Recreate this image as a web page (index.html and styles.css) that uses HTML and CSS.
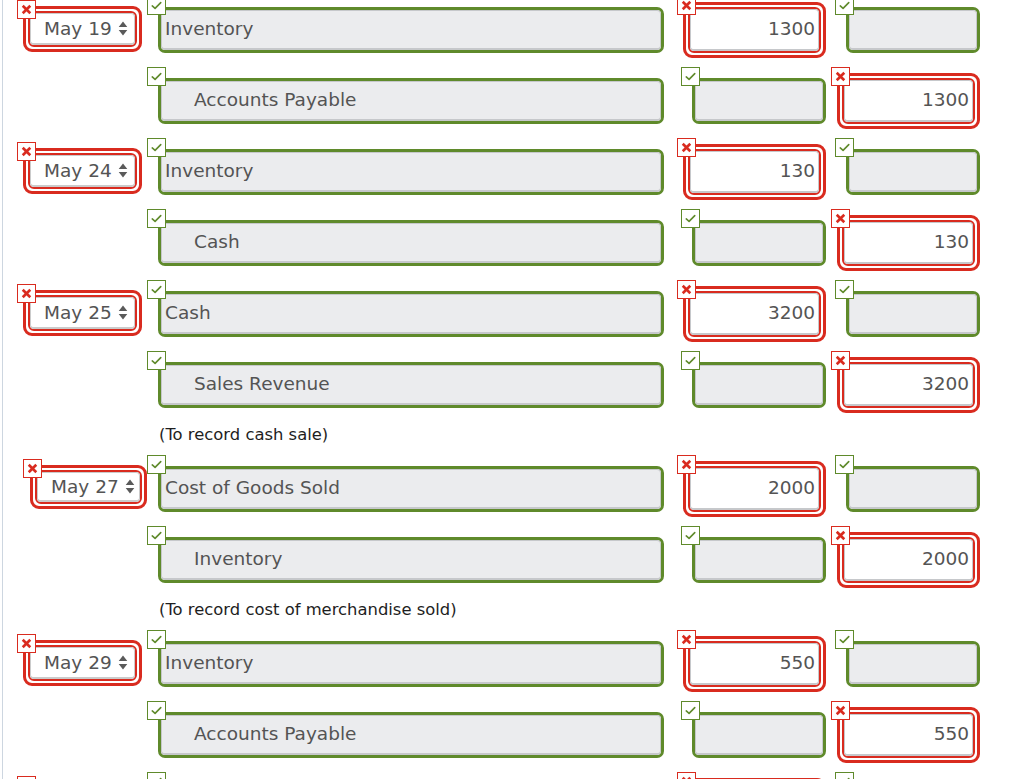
FILE: index.html
```html
<!DOCTYPE html>
<html>
<head>
<meta charset="utf-8">
<link rel="stylesheet" href="styles.css">
</head>
<body>
<div class="page">
  <div class="journal">

    <div class="row">
      <div class="cell date bad"><span class="badge x"><svg viewBox="0 0 18 18"><path d="M5 5L13 13M13 5L5 13"/></svg></span><div class="dbox"><div class="rin"><div class="sel">May 19<svg class="arr" viewBox="0 0 9 14"><path d="M4.5 0.5L8.5 5.5H0.5Z M4.5 13.5L8.5 8.5H0.5Z"/></svg></div></div></div></div>
      <div class="cell acct ok"><span class="badge v"><svg viewBox="0 0 18 18"><path d="M4.5 9.5L7.5 12L13.5 6"/></svg></span><div class="gbox"><div class="field">Inventory</div></div></div>
      <div class="cell amt bad"><span class="badge x"><svg viewBox="0 0 18 18"><path d="M5 5L13 13M13 5L5 13"/></svg></span><div class="rbox"><div class="rin"><div class="field white num">1300</div></div></div></div>
      <div class="cell amt ok"><span class="badge v"><svg viewBox="0 0 18 18"><path d="M4.5 9.5L7.5 12L13.5 6"/></svg></span><div class="gbox"><div class="field"></div></div></div>
    </div>

    <div class="row">
      <div class="cell date"></div>
      <div class="cell acct ok"><span class="badge v"><svg viewBox="0 0 18 18"><path d="M4.5 9.5L7.5 12L13.5 6"/></svg></span><div class="gbox"><div class="field indent">Accounts Payable</div></div></div>
      <div class="cell amt ok"><span class="badge v"><svg viewBox="0 0 18 18"><path d="M4.5 9.5L7.5 12L13.5 6"/></svg></span><div class="gbox"><div class="field"></div></div></div>
      <div class="cell amt bad"><span class="badge x"><svg viewBox="0 0 18 18"><path d="M5 5L13 13M13 5L5 13"/></svg></span><div class="rbox"><div class="rin"><div class="field white num">1300</div></div></div></div>
    </div>

    <div class="row">
      <div class="cell date bad"><span class="badge x"><svg viewBox="0 0 18 18"><path d="M5 5L13 13M13 5L5 13"/></svg></span><div class="dbox"><div class="rin"><div class="sel">May 24<svg class="arr" viewBox="0 0 9 14"><path d="M4.5 0.5L8.5 5.5H0.5Z M4.5 13.5L8.5 8.5H0.5Z"/></svg></div></div></div></div>
      <div class="cell acct ok"><span class="badge v"><svg viewBox="0 0 18 18"><path d="M4.5 9.5L7.5 12L13.5 6"/></svg></span><div class="gbox"><div class="field">Inventory</div></div></div>
      <div class="cell amt bad"><span class="badge x"><svg viewBox="0 0 18 18"><path d="M5 5L13 13M13 5L5 13"/></svg></span><div class="rbox"><div class="rin"><div class="field white num">130</div></div></div></div>
      <div class="cell amt ok"><span class="badge v"><svg viewBox="0 0 18 18"><path d="M4.5 9.5L7.5 12L13.5 6"/></svg></span><div class="gbox"><div class="field"></div></div></div>
    </div>

    <div class="row">
      <div class="cell date"></div>
      <div class="cell acct ok"><span class="badge v"><svg viewBox="0 0 18 18"><path d="M4.5 9.5L7.5 12L13.5 6"/></svg></span><div class="gbox"><div class="field indent">Cash</div></div></div>
      <div class="cell amt ok"><span class="badge v"><svg viewBox="0 0 18 18"><path d="M4.5 9.5L7.5 12L13.5 6"/></svg></span><div class="gbox"><div class="field"></div></div></div>
      <div class="cell amt bad"><span class="badge x"><svg viewBox="0 0 18 18"><path d="M5 5L13 13M13 5L5 13"/></svg></span><div class="rbox"><div class="rin"><div class="field white num">130</div></div></div></div>
    </div>

    <div class="row">
      <div class="cell date bad"><span class="badge x"><svg viewBox="0 0 18 18"><path d="M5 5L13 13M13 5L5 13"/></svg></span><div class="dbox"><div class="rin"><div class="sel">May 25<svg class="arr" viewBox="0 0 9 14"><path d="M4.5 0.5L8.5 5.5H0.5Z M4.5 13.5L8.5 8.5H0.5Z"/></svg></div></div></div></div>
      <div class="cell acct ok"><span class="badge v"><svg viewBox="0 0 18 18"><path d="M4.5 9.5L7.5 12L13.5 6"/></svg></span><div class="gbox"><div class="field">Cash</div></div></div>
      <div class="cell amt bad"><span class="badge x"><svg viewBox="0 0 18 18"><path d="M5 5L13 13M13 5L5 13"/></svg></span><div class="rbox"><div class="rin"><div class="field white num">3200</div></div></div></div>
      <div class="cell amt ok"><span class="badge v"><svg viewBox="0 0 18 18"><path d="M4.5 9.5L7.5 12L13.5 6"/></svg></span><div class="gbox"><div class="field"></div></div></div>
    </div>

    <div class="row">
      <div class="cell date"></div>
      <div class="cell acct ok"><span class="badge v"><svg viewBox="0 0 18 18"><path d="M4.5 9.5L7.5 12L13.5 6"/></svg></span><div class="gbox"><div class="field indent">Sales Revenue</div></div></div>
      <div class="cell amt ok"><span class="badge v"><svg viewBox="0 0 18 18"><path d="M4.5 9.5L7.5 12L13.5 6"/></svg></span><div class="gbox"><div class="field"></div></div></div>
      <div class="cell amt bad"><span class="badge x"><svg viewBox="0 0 18 18"><path d="M5 5L13 13M13 5L5 13"/></svg></span><div class="rbox"><div class="rin"><div class="field white num">3200</div></div></div></div>
    </div>

    <div class="note">(To record cash sale)</div>

    <div class="row">
      <div class="cell date bad shift"><span class="badge x"><svg viewBox="0 0 18 18"><path d="M5 5L13 13M13 5L5 13"/></svg></span><div class="dbox"><div class="rin"><div class="sel">May 27<svg class="arr" viewBox="0 0 9 14"><path d="M4.5 0.5L8.5 5.5H0.5Z M4.5 13.5L8.5 8.5H0.5Z"/></svg></div></div></div></div>
      <div class="cell acct ok"><span class="badge v"><svg viewBox="0 0 18 18"><path d="M4.5 9.5L7.5 12L13.5 6"/></svg></span><div class="gbox"><div class="field">Cost of Goods Sold</div></div></div>
      <div class="cell amt bad"><span class="badge x"><svg viewBox="0 0 18 18"><path d="M5 5L13 13M13 5L5 13"/></svg></span><div class="rbox"><div class="rin"><div class="field white num">2000</div></div></div></div>
      <div class="cell amt ok"><span class="badge v"><svg viewBox="0 0 18 18"><path d="M4.5 9.5L7.5 12L13.5 6"/></svg></span><div class="gbox"><div class="field"></div></div></div>
    </div>

    <div class="row">
      <div class="cell date"></div>
      <div class="cell acct ok"><span class="badge v"><svg viewBox="0 0 18 18"><path d="M4.5 9.5L7.5 12L13.5 6"/></svg></span><div class="gbox"><div class="field indent">Inventory</div></div></div>
      <div class="cell amt ok"><span class="badge v"><svg viewBox="0 0 18 18"><path d="M4.5 9.5L7.5 12L13.5 6"/></svg></span><div class="gbox"><div class="field"></div></div></div>
      <div class="cell amt bad"><span class="badge x"><svg viewBox="0 0 18 18"><path d="M5 5L13 13M13 5L5 13"/></svg></span><div class="rbox"><div class="rin"><div class="field white num">2000</div></div></div></div>
    </div>

    <div class="note">(To record cost of merchandise sold)</div>

    <div class="row">
      <div class="cell date bad"><span class="badge x"><svg viewBox="0 0 18 18"><path d="M5 5L13 13M13 5L5 13"/></svg></span><div class="dbox"><div class="rin"><div class="sel">May 29<svg class="arr" viewBox="0 0 9 14"><path d="M4.5 0.5L8.5 5.5H0.5Z M4.5 13.5L8.5 8.5H0.5Z"/></svg></div></div></div></div>
      <div class="cell acct ok"><span class="badge v"><svg viewBox="0 0 18 18"><path d="M4.5 9.5L7.5 12L13.5 6"/></svg></span><div class="gbox"><div class="field">Inventory</div></div></div>
      <div class="cell amt bad"><span class="badge x"><svg viewBox="0 0 18 18"><path d="M5 5L13 13M13 5L5 13"/></svg></span><div class="rbox"><div class="rin"><div class="field white num">550</div></div></div></div>
      <div class="cell amt ok"><span class="badge v"><svg viewBox="0 0 18 18"><path d="M4.5 9.5L7.5 12L13.5 6"/></svg></span><div class="gbox"><div class="field"></div></div></div>
    </div>

    <div class="row">
      <div class="cell date"></div>
      <div class="cell acct ok"><span class="badge v"><svg viewBox="0 0 18 18"><path d="M4.5 9.5L7.5 12L13.5 6"/></svg></span><div class="gbox"><div class="field indent">Accounts Payable</div></div></div>
      <div class="cell amt ok"><span class="badge v"><svg viewBox="0 0 18 18"><path d="M4.5 9.5L7.5 12L13.5 6"/></svg></span><div class="gbox"><div class="field"></div></div></div>
      <div class="cell amt bad"><span class="badge x"><svg viewBox="0 0 18 18"><path d="M5 5L13 13M13 5L5 13"/></svg></span><div class="rbox"><div class="rin"><div class="field white num">550</div></div></div></div>
    </div>

    <div class="row">
      <div class="cell date bad"><span class="badge x"><svg viewBox="0 0 18 18"><path d="M5 5L13 13M13 5L5 13"/></svg></span><div class="dbox"><div class="rin"><div class="sel"></div></div></div></div>
      <div class="cell acct ok"><span class="badge v"><svg viewBox="0 0 18 18"><path d="M4.5 9.5L7.5 12L13.5 6"/></svg></span><div class="gbox"><div class="field"></div></div></div>
      <div class="cell amt bad"><span class="badge x"><svg viewBox="0 0 18 18"><path d="M5 5L13 13M13 5L5 13"/></svg></span><div class="rbox"><div class="rin"><div class="field white num"></div></div></div></div>
      <div class="cell amt ok"><span class="badge v"><svg viewBox="0 0 18 18"><path d="M4.5 9.5L7.5 12L13.5 6"/></svg></span><div class="gbox"><div class="field"></div></div></div>
    </div>

  </div>
</div>
</body>
</html>
```

FILE: styles.css
```css
html, body {
  margin: 0;
  padding: 0;
  background: #ffffff;
  height: 779px;
  overflow: hidden;
}

body {
  font-family: "DejaVu Sans", Verdana, sans-serif;
  color: #505050;
}

.page {
  margin-left: 2px;
  border-left: 1px solid #cdd6e0;
  min-height: 779px;
  padding-left: 14px;
}

.journal {
  display: flex;
  flex-direction: column;
  margin-top: -4px;
}

.row {
  display: grid;
  grid-template-columns: 130px 530px 154px 160px;
  height: 71px;
}

.cell {
  position: relative;
}

.badge {
  position: absolute;
  top: 0;
  left: 0;
  width: 19px;
  height: 19px;
  box-sizing: border-box;
  background: #ffffff;
  z-index: 2;
}

.badge svg {
  display: block;
  width: 17px;
  height: 17px;
  fill: none;
}

.badge.v {
  border: 1px solid #5f8a2b;
}

.badge.v svg path {
  stroke: #5f8a2b;
  stroke-width: 1.7;
  stroke-linecap: round;
  stroke-linejoin: round;
}

.badge.x {
  border: 1px solid #d92b1f;
}

.badge.x svg path {
  stroke: #d92b1f;
  stroke-width: 2.8;
}

/* green (correct) boxes */
.gbox {
  box-sizing: border-box;
  height: 46px;
  border: 3px solid #5f8a2b;
  border-radius: 7px;
  background: #ffffff;
}

.field {
  box-sizing: border-box;
  height: 100%;
  background: #ebecee;
  border: 1px solid #c6c8cb;
  border-bottom-width: 2px;
  border-radius: 4px;
  font-size: 18.5px;
  line-height: 20px;
  display: flex;
  align-items: center;
  padding-left: 3px;
  padding-bottom: 1px;
  white-space: nowrap;
  overflow: hidden;
  color: #545454;
}

.field.indent {
  padding-left: 32px;
}

.field.white {
  background: #ffffff;
}

.field.num {
  justify-content: flex-end;
  padding-right: 3px;
  padding-left: 0;
}

/* red (incorrect) boxes */
.rbox {
  box-sizing: border-box;
  height: 56px;
  width: 143px;
  border: 3px solid #d92b1f;
  border-radius: 9px;
  padding: 2px;
  background: #ffffff;
}

.rin {
  box-sizing: border-box;
  height: 100%;
  border: 2px solid #d92b1f;
  border-radius: 6px;
}

/* account column */
.acct .gbox {
  margin-left: 11px;
  margin-top: 11px;
  width: 506px;
}

/* amount columns */
.amt.ok .badge {
  left: 4px;
}

.amt.ok .gbox {
  margin-left: 15px;
  margin-top: 11px;
  width: 134px;
}

.amt.bad .rbox {
  margin-left: 6px;
  margin-top: 6px;
}

/* date column */
.date.bad .badge {
  top: 4px;
}

.dbox {
  box-sizing: border-box;
  margin-left: 6px;
  margin-top: 10px;
  width: 119px;
  height: 46px;
  border: 3px solid #d92b1f;
  border-radius: 9px;
  padding: 2px;
  background: #ffffff;
}

.date.shift .badge {
  left: 6px;
}

.date.shift .dbox {
  margin-left: 13px;
  width: 117px;
  height: 44px;
}

.sel {
  box-sizing: border-box;
  height: 100%;
  background: #ffffff;
  border: 1px solid #cbcbcb;
  border-bottom-width: 2px;
  border-radius: 4px;
  font-size: 18.5px;
  display: flex;
  align-items: center;
  padding-left: 13px;
  color: #545454;
  white-space: nowrap;
}

.arr {
  width: 10px;
  height: 15px;
  margin-left: 6px;
  fill: #5a5a5a;
}

.note {
  box-sizing: border-box;
  height: 33px;
  padding-top: 3px;
  padding-left: 142px;
  font-size: 16.4px;
  line-height: 19px;
  color: #1e1e1e;
}
```
